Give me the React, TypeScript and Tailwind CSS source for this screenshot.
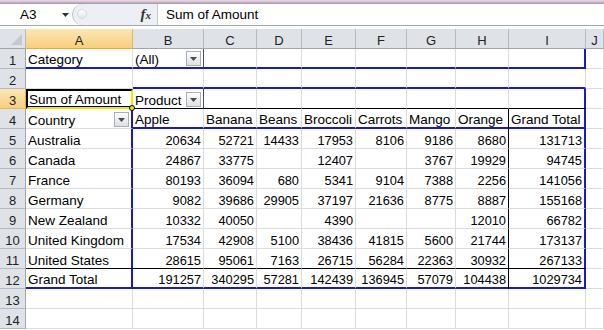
import React from "react";

const BLUE_B = "border-b-2 border-b-[#1a1ac4]";
const BLUE_R = "border-r-2 border-r-[#1a1ac4]";
const GRID_B = "border-b border-b-[#dadcdd]";
const GRID_R = "border-r border-r-[#dadcdd]";
const BLACK_B = "border-b border-b-black";
const BLACK_R = "border-r border-r-black";
const DARK_R = "border-r border-r-[#505050]";

const COLS = ["A", "B", "C", "D", "E", "F", "G", "H", "I", "J"];
const PRODUCTS = ["Apple", "Banana", "Beans", "Broccoli", "Carrots", "Mango", "Orange"];

const rows: [string, ...(number | null)[]][] = [
  ["Australia", 20634, 52721, 14433, 17953, 8106, 9186, 8680, 131713],
  ["Canada", 24867, 33775, null, 12407, null, 3767, 19929, 94745],
  ["France", 80193, 36094, 680, 5341, 9104, 7388, 2256, 141056],
  ["Germany", 9082, 39686, 29905, 37197, 21636, 8775, 8887, 155168],
  ["New Zealand", 10332, 40050, null, 4390, null, null, 12010, 66782],
  ["United Kingdom", 17534, 42908, 5100, 38436, 41815, 5600, 21744, 173137],
  ["United States", 28615, 95061, 7163, 26715, 56284, 22363, 30932, 267133],
  ["Grand Total", 191257, 340295, 57281, 142439, 136945, 57079, 104438, 1029734],
];

// r is the sheet row (1..14), c the column index (0 = A)
function borders(r: number, c: number) {
  let b = GRID_B;
  if (
    (r === 1 && c <= 8) ||
    (r === 2 && c >= 1 && c <= 8) ||
    (r === 4 && c >= 1 && c <= 8) ||
    (r === 12 && c <= 8)
  )
    b = BLUE_B;
  else if ((r === 3 && c >= 1 && c <= 8) || (r === 11 && c <= 8)) b = BLACK_B;

  let rt = GRID_R;
  if (c === 8 && (r === 1 || (r >= 3 && r <= 12))) rt = BLUE_R;
  else if (c === 0 && r >= 4 && r <= 12) rt = BLUE_R;
  else if (c === 7 && r >= 4 && r <= 12) rt = BLACK_R;
  else if (c === 1 && (r === 1 || r === 3)) rt = DARK_R;
  return `${b} ${rt}`;
}

function DropBtn() {
  return (
    <span className="ml-auto mr-[2px] mb-[1px] flex h-[15px] w-[15px] shrink-0 items-center justify-center border border-[#a9afb7] bg-linear-to-b from-[#fdfdfd] to-[#dde0e4]">
      <svg width="7" height="4" viewBox="0 0 7 4">
        <path d="M0 0h7L3.5 4z" fill="#4a4a4a" />
      </svg>
    </span>
  );
}

function cellContent(r: number, c: number): { text?: React.ReactNode; num?: boolean; drop?: boolean } {
  if (r === 1) {
    if (c === 0) return { text: "Category" };
    if (c === 1) return { text: "(All)", drop: true };
  }
  if (r === 3) {
    if (c === 0) return { text: "Sum of Amount" };
    if (c === 1) return { text: "Product", drop: true };
  }
  if (r === 4) {
    if (c === 0) return { text: "Country", drop: true };
    if (c >= 1 && c <= 7) return { text: PRODUCTS[c - 1] };
    if (c === 8) return { text: "Grand Total" };
  }
  if (r >= 5 && r <= 12) {
    const row = rows[r - 5];
    if (c === 0) return { text: row[0] };
    if (c >= 1 && c <= 8) {
      const v = row[c];
      return { text: v === null ? "" : String(v), num: true };
    }
  }
  return {};
}

function FormulaBar() {
  return (
    <div>
      <div className="h-[3px] bg-linear-to-b from-[#eedde9] to-[#c6a6bf]" />
      <div className="flex h-[22px] border-t border-t-[#9aa1a9] bg-white">
        <div className="flex w-[72px] items-center">
          <span className="ml-[20px] leading-[15px]">A3</span>
          <svg className="ml-[25px]" width="7" height="4" viewBox="0 0 7 4">
            <path d="M0 0h7L3.5 4z" fill="#333" />
          </svg>
        </div>
        <div className="relative flex w-[85px] items-center justify-end rounded-l-[11px] border-l border-l-[#b7bdc5] bg-[#eceff3] pr-[6px]">
          <span className="absolute left-[4px] top-[5px] h-[10px] w-[10px] rounded-full border border-[#d5d9de] bg-linear-to-b from-[#ffffff] to-[#e2e5e9]" />
          <span className="font-['Liberation_Serif',serif] text-[15px] font-bold italic leading-[15px] text-[#333]">
            f<span className="text-[11px]">x</span>
          </span>
        </div>
        <div className="flex flex-1 items-center border-l border-l-[#c3c8ce] pl-[8px]">
          <span className="leading-[15px]">Sum of Amount</span>
        </div>
      </div>
      <div className="h-[4px] border-t border-t-[#a3a9b1] bg-white" />
    </div>
  );
}

export default function App() {
  const sheetRows = Array.from({ length: 14 }, (_, i) => i + 1);

  return (
    <div className="h-[330px] w-[604px] overflow-hidden bg-white font-['Liberation_Sans',Arial,sans-serif] text-[13.5px] text-black">
      <FormulaBar />
      <div className="grid auto-rows-[20px] grid-cols-[26px_107px_71px_53px_45px_54px_51px_49px_53px_77px_18px]">
        {/* corner */}
        <div className="relative border-r border-b border-r-[#b3bac3] border-b-[#9ea5ad] bg-[#dfe3e8]">
          <svg className="absolute right-[3px] bottom-[3px]" width="11" height="11" viewBox="0 0 11 11">
            <path d="M11 0V11H0z" fill="#c4c9cf" />
          </svg>
        </div>
        {COLS.map((col, c) =>
          c === 0 ? (
            <div
              key={col}
              className="flex items-end justify-center border-r border-b border-r-[#e3b564] border-b-[#f0a830] bg-linear-to-b from-[#fbe6b4] to-[#f7cf7c] text-[13px] leading-[15px] text-[#222]"
            >
              {col}
            </div>
          ) : (
            <div
              key={col}
              className="flex items-end justify-center border-r border-b border-r-[#b3bac3] border-b-[#9ea5ad] bg-[#dfe3e8] text-[13px] leading-[15px] text-[#222]"
            >
              {col}
            </div>
          )
        )}

        {sheetRows.map((r) => (
          <React.Fragment key={r}>
            {r === 3 ? (
              <div className="flex items-end justify-center border-r border-b border-r-[#f0a830] border-b-[#e3b564] bg-linear-to-b from-[#fbe6b4] to-[#f7cf7c] text-[13px] leading-[15px] text-[#222]">
                {r}
              </div>
            ) : (
              <div className="flex items-end justify-center border-r border-b border-r-[#9ea5ad] border-b-[#b3bac3] bg-[#dfe3e8] text-[13px] leading-[15px] text-[#222]">
                {r}
              </div>
            )}
            {COLS.map((col, c) => {
              const { text, num, drop } = cellContent(r, c);
              if (r === 3 && c === 0) {
                return (
                  <div
                    key={col}
                    className="relative flex items-end border-t-2 border-l-2 border-r-2 border-b-2 border-t-black border-l-black border-r-[#f2e600] border-b-[#f2e600] pl-[1px] leading-[15px] whitespace-nowrap shadow-[inset_0_-1px_0_#000]"
                  >
                    {text}
                    <span className="absolute -right-[4px] -bottom-[4px] z-10 h-[6px] w-[6px] rounded-full border border-black bg-[#f2e600]" />
                  </div>
                );
              }
              return (
                <div
                  key={col}
                  className={`flex items-end overflow-hidden whitespace-nowrap leading-[15px] ${borders(r, c)} ${
                    num ? "justify-end pr-[2px] text-[12.8px]" : "pl-[2px]"
                  }`}
                >
                  {text}
                  {drop && <DropBtn />}
                </div>
              );
            })}
          </React.Fragment>
        ))}
      </div>
    </div>
  );
}
